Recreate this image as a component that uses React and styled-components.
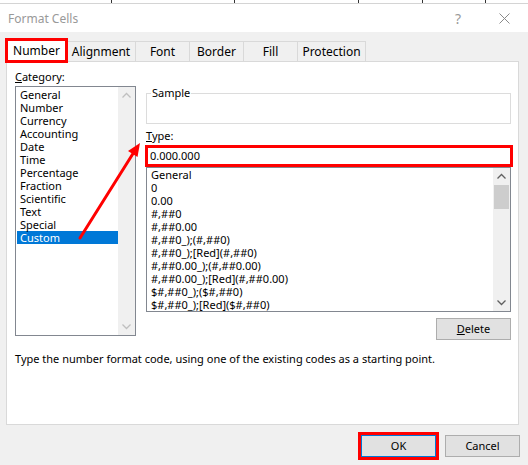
import React from 'react';
import styled, { createGlobalStyle, css } from 'styled-components';

const GlobalStyle = createGlobalStyle`
  html, body {
    margin: 0;
    padding: 0;
  }
  body {
    background: #f0f0f0;
    font-family: "Noto Sans", "Liberation Sans", sans-serif;
    font-size: 11px;
    color: #000;
  }
  * {
    box-sizing: border-box;
  }
`;

const redMark = css`
  outline: 3px solid #ff0000;
`;

const Dialog = styled.div`
  position: relative;
  width: 528px;
  height: 465px;
  display: flex;
  flex-direction: column;
  background: #f0f0f0;
  overflow: hidden;
`;

// strip of the sheet behind the dialog
const SheetEdge = styled.div`
  height: 4px;
  background:
    linear-gradient(#333, #333) 111px 0 / 1px 3px no-repeat,
    linear-gradient(#333, #333) 234px 0 / 1px 3px no-repeat,
    linear-gradient(#333, #333) 358px 0 / 1px 3px no-repeat,
    linear-gradient(#333, #333) 422px 0 / 1px 3px no-repeat,
    linear-gradient(#333, #333) 485px 0 / 1px 3px no-repeat,
    #fff;
  border-bottom: 1px solid #d4d4d4;
`;

const TitleBar = styled.div`
  height: 28px;
  display: flex;
  align-items: center;
  padding: 0 0 0 8px;
  background: #fff;
  color: #999;
`;

const Title = styled.span`
  flex: 1;
  font-size: 12px;
`;

const HelpMark = styled.span`
  width: 12px;
  margin-right: 32px;
  font-size: 14px;
  color: #9a9a9a;
`;

const CloseIcon = styled.svg`
  width: 11px;
  height: 11px;
  margin-right: 18px;
`;

const Body = styled.div`
  padding: 7px 9px 0 6px;
`;

const TabRow = styled.div`
  display: flex;
  align-items: flex-end;
  height: 22px;
`;

const Tab = styled.div`
  width: ${(p) => p.$w}px;
  height: 20px;
  line-height: 19px;
  font-size: 12px;
  text-align: center;
  background: #f0f0f0;
  border: 1px solid #d9d9d9;
  border-bottom: none;
  border-left: ${(p) => (p.$first ? '1px solid #d9d9d9' : 'none')};
  ${(p) =>
    p.$active &&
    css`
      position: relative;
      z-index: 1;
      height: 23px;
      line-height: 21px;
      margin-bottom: -1px;
      background: #fff;
      ${redMark};
      outline-offset: -2px;
    `}
`;

const Panel = styled.div`
  width: 513px;
  height: 364px;
  background: #fff;
  border: 1px solid #d9d9d9;
  padding: 7px 7px 0 8px;
`;

const Columns = styled.div`
  display: grid;
  grid-template-columns: 121px 1fr;
  column-gap: 10px;
  align-items: start;
`;

const Column = styled.div`
  display: flex;
  flex-direction: column;
`;

const FieldLabel = styled.div`
  height: ${(p) => p.$h || 14}px;
  line-height: ${(p) => p.$h || 14}px;
  margin-top: ${(p) => p.$top || 0}px;
  u {
    text-decoration: underline;
    text-underline-offset: 1px;
  }
`;

const ListBox = styled.div`
  display: flex;
  height: ${(p) => p.$h}px;
  margin-top: ${(p) => p.$top || 0}px;
  border: 1px solid #828790;
  background: #fff;
`;

const Items = styled.div`
  flex: 1;
  padding: ${(p) => p.$pad || '0'};
  overflow: hidden;
`;

const Item = styled.div`
  height: 13px;
  line-height: 13px;
  padding-left: ${(p) => p.$indent || 3}px;
  white-space: nowrap;
  ${(p) =>
    p.$selected &&
    css`
      background: #0078d7;
      color: #fff;
    `}
`;

const ScrollBar = styled.div`
  width: 17px;
  display: flex;
  flex-direction: column;
  align-items: center;
  background: #f0f0f0;
`;

const Thumb = styled.div`
  width: 15px;
  height: 24px;
  background: #cdcdcd;
`;

const Spacer = styled.div`
  flex: 1;
`;

const Chevron = styled.svg`
  width: 17px;
  height: 17px;
  flex: none;
`;

const SampleBox = styled.fieldset`
  margin: 17px 0 0;
  padding: 0 4px;
  height: 38px;
  border: 1px solid #dcdcdc;
  legend {
    padding: 0 1px;
    line-height: 14px;
  }
`;

const TypeInput = styled.div`
  height: 22px;
  margin: 2px -2px 0 -1px;
  padding-left: 2px;
  border: 3px solid #ff0000;
  line-height: 16px;
`;

const Button = styled.div`
  width: 75px;
  height: 22px;
  line-height: 20px;
  text-align: center;
  background: #e1e1e1;
  border: 1px solid ${(p) => (p.$default ? '#0078d7' : '#adadad')};
  ${(p) => p.$marked && redMark};
  u {
    text-decoration: underline;
    text-underline-offset: 1px;
  }
`;

const DeleteRow = styled.div`
  display: flex;
  justify-content: flex-end;
  margin-top: 6px;
`;

const Hint = styled.p`
  margin: 12px 0 0;
  line-height: 14px;
`;

const Footer = styled.div`
  display: flex;
  justify-content: flex-end;
  gap: 9px;
  padding: 10px 8px 0 0;
`;

const Annotation = styled.svg`
  position: absolute;
  left: 0;
  top: 0;
  pointer-events: none;
`;

const categories = [
  'General', 'Number', 'Currency', 'Accounting', 'Date', 'Time',
  'Percentage', 'Fraction', 'Scientific', 'Text', 'Special', 'Custom',
];

const formats = [
  'General',
  '0',
  '0.00',
  '#,##0',
  '#,##0.00',
  '#,##0_);(#,##0)',
  '#,##0_);[Red](#,##0)',
  '#,##0.00_);(#,##0.00)',
  '#,##0.00_);[Red](#,##0.00)',
  '$#,##0_);($#,##0)',
  '$#,##0_);[Red]($#,##0)',
];

const tabs = [
  ['Number', 61],
  ['Alignment', 69],
  ['Font', 54],
  ['Border', 54],
  ['Fill', 54],
  ['Protection', 68],
];

const Arrow = ({ dir, color }) => (
  <Chevron viewBox="0 0 17 17">
    <polyline
      points={dir === 'up' ? '4.5,10.5 8.5,6.5 12.5,10.5' : '4.5,6.5 8.5,10.5 12.5,6.5'}
      fill="none"
      stroke={color}
      strokeWidth="1.3"
    />
  </Chevron>
);

const App = () => {
  return (
    <Dialog>
      <GlobalStyle />
      <SheetEdge />
      <TitleBar>
        <Title>Format Cells</Title>
        <HelpMark>?</HelpMark>
        <CloseIcon viewBox="0 0 11 11">
          <path d="M0.5 0.5 L10.5 10.5 M10.5 0.5 L0.5 10.5" stroke="#8a8a8a" strokeWidth="1" />
        </CloseIcon>
      </TitleBar>
      <Body>
        <TabRow>
          {tabs.map(([name, w], i) => (
            <Tab key={name} $w={w} $first={i === 0} $active={i === 0}>
              {name}
            </Tab>
          ))}
        </TabRow>
        <Panel>
          <Columns>
            <Column>
              <FieldLabel $h={15}>
                <u>C</u>ategory:
              </FieldLabel>
              <ListBox $h={250} $top={2}>
                <Items $pad="1px 0 0 1px">
                  {categories.map((c) => (
                    <Item key={c} $selected={c === 'Custom'}>
                      {c}
                    </Item>
                  ))}
                </Items>
                <ScrollBar>
                  <Arrow dir="up" color="#bfbfbf" />
                  <Spacer />
                  <Arrow dir="down" color="#bfbfbf" />
                </ScrollBar>
              </ListBox>
            </Column>
            <Column>
              <SampleBox>
                <legend>Sample</legend>
              </SampleBox>
              <FieldLabel $top={5}>
                <u>T</u>ype:
              </FieldLabel>
              <TypeInput>0.000.000</TypeInput>
              <ListBox $h={145}>
                <Items>
                  {formats.map((f) => (
                    <Item key={f} $indent={4}>
                      {f}
                    </Item>
                  ))}
                </Items>
                <ScrollBar>
                  <Arrow dir="up" color="#606060" />
                  <Thumb />
                  <Spacer />
                  <Arrow dir="down" color="#606060" />
                </ScrollBar>
              </ListBox>
              <DeleteRow>
                <Button>
                  <u>D</u>elete
                </Button>
              </DeleteRow>
            </Column>
          </Columns>
          <Hint>Type the number format code, using one of the existing codes as a starting point.</Hint>
        </Panel>
      </Body>
      <Footer>
        <Button $default $marked>
          OK
        </Button>
        <Button>Cancel</Button>
      </Footer>
      <Annotation width="528" height="465" viewBox="0 0 528 465">
        <line x1="80" y1="238" x2="134" y2="152" stroke="#ff0000" strokeWidth="3" strokeLinecap="round" />
        <polygon points="140,143 137.5,157 128,151" fill="#ff0000" />
      </Annotation>
    </Dialog>
  );
};

export default App;
